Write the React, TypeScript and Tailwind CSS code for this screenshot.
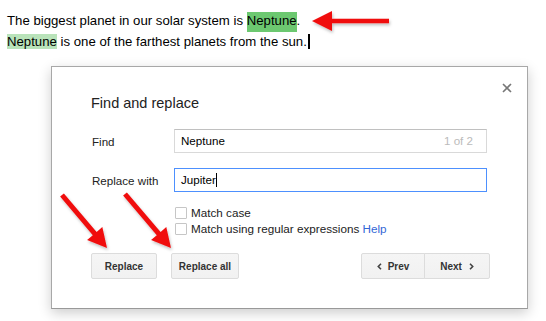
import React from "react";

type Pt = [number, number];

function arrowPoints(a: Pt, t: Pt, headLen: number, headHalf: number, shaftHalf: number): string {
  const dx = t[0] - a[0];
  const dy = t[1] - a[1];
  const len = Math.hypot(dx, dy);
  const ux = dx / len;
  const uy = dy / len;
  const nx = -uy;
  const ny = ux;
  const bx = t[0] - ux * headLen;
  const by = t[1] - uy * headLen;
  const pts: Pt[] = [
    [a[0] + nx * shaftHalf, a[1] + ny * shaftHalf],
    [bx + nx * shaftHalf, by + ny * shaftHalf],
    [bx + nx * headHalf, by + ny * headHalf],
    [t[0], t[1]],
    [bx - nx * headHalf, by - ny * headHalf],
    [bx - nx * shaftHalf, by - ny * shaftHalf],
    [a[0] - nx * shaftHalf, a[1] - ny * shaftHalf],
  ];
  return pts.map((p) => p.join(",")).join(" ");
}

function Arrows() {
  return (
    <svg
      className="pointer-events-none absolute left-0 top-0"
      width={546}
      height={321}
      viewBox="0 0 546 321"
    >
      <defs>
        <filter id="sh" x="-20%" y="-20%" width="140%" height="140%">
          <feDropShadow dx="1" dy="2" stdDeviation="1.5" floodColor="#000" floodOpacity="0.25" />
        </filter>
      </defs>
      <g fill="#f00f0f" filter="url(#sh)">
        <polygon points={arrowPoints([389, 21], [312, 21], 20, 10, 2.2)} />
        <polygon points={arrowPoints([62, 195], [107, 248], 19, 10, 2.5)} />
        <polygon points={arrowPoints([125, 194], [171, 248], 19, 10, 2.5)} />
      </g>
    </svg>
  );
}

function Checkbox() {
  return <span className="inline-block h-[12px] w-[12px] shrink-0 rounded-[1px] border border-[#c6c6c6] bg-white" />;
}

function Btn({ children, className = "" }: { children: React.ReactNode; className?: string }) {
  return (
    <div
      className={
        "flex h-[26px] items-center justify-center border border-[#dcdcdc] bg-gradient-to-b from-[#f5f5f5] to-[#f1f1f1] text-[10px] font-bold text-[#333] " +
        className
      }
    >
      {children}
    </div>
  );
}

export default function App() {
  return (
    <div
      className="relative h-[321px] w-[546px] overflow-hidden bg-white"
      style={{ fontFamily: '"Liberation Sans", Arial, sans-serif' }}
    >
      <div className="pl-[7px] pt-[11px] text-[13.2px] leading-[20px] text-black">
        <div>
          The biggest planet in our solar system is{" "}
          <span className="bg-[#6cc870] pb-[4px] pt-[1px]">Neptune</span>.
        </div>
        <div>
          <span className="bg-[#b9e3ba]">Neptune</span> is one of the farthest planets from the sun.
          <span className="ml-[1px] inline-block h-[15px] w-[2px] translate-y-[3px] bg-black" />
        </div>
      </div>

      <div className="relative ml-[51px] mt-[14px] h-[243px] w-[477px] border border-[#a8a8a8] border-b-[#999] bg-white pl-[39px] pr-[39px] pt-[27px] shadow-[0_4px_12px_rgba(0,0,0,0.2)]">
        <svg className="absolute right-[15px] top-[16px]" width="10" height="10" viewBox="0 0 10 10">
          <path d="M1 1L9 9M9 1L1 9" stroke="#777" strokeWidth="1.6" />
        </svg>

        <div className="text-[14.5px] leading-[18px] text-[#222]">Find and replace</div>

        <div className="mt-[17px] flex items-center text-[11.6px] text-[#222]">
          <div className="w-[83px] pl-[1px] pt-[2px]">Find</div>
          <div className="flex h-[24px] w-[313px] items-center justify-between border border-[#d9d9d9] border-t-[#c0c0c0] pl-[6px] pr-[13px] text-black">
            <span>Neptune</span>
            <span className="text-[#bbb]">1 of 2</span>
          </div>
        </div>

        <div className="mt-[15px] flex items-center text-[11.6px] text-[#222]">
          <div className="w-[83px] pl-[1px] pt-[2px]">Replace with</div>
          <div className="flex h-[24px] w-[313px] items-center border border-[#4d90fe] pl-[6px] text-black">
            <span>Jupiter</span>
            <span className="inline-block h-[14px] w-[1px] bg-black" />
          </div>
        </div>

        <div className="ml-[84px] mt-[15px] flex flex-col gap-[4px] text-[11.7px] leading-[12px] text-[#222]">
          <div className="flex items-center gap-[4px]">
            <Checkbox />
            <span>Match case</span>
          </div>
          <div className="flex items-center gap-[4px]">
            <Checkbox />
            <span>
              Match using regular expressions <span className="text-[#3367d6]">Help</span>
            </span>
          </div>
        </div>

        <div className="mt-[18px] flex items-center">
          <Btn className="w-[66px] rounded-[2px]">Replace</Btn>
          <Btn className="ml-[14px] w-[68px] rounded-[2px]">Replace all</Btn>
          <div className="ml-auto mr-[-2px] flex">
            <Btn className="w-[64px] gap-[6px] rounded-l-[2px]">
              <svg width="5" height="7" viewBox="0 0 5 7">
                <path d="M4 0.8L1.3 3.5L4 6.2" stroke="#444" strokeWidth="1.6" fill="none" />
              </svg>
              <span>Prev</span>
            </Btn>
            <Btn className="-ml-px w-[66px] gap-[7px] rounded-r-[2px]">
              <span>Next</span>
              <svg width="5" height="7" viewBox="0 0 5 7">
                <path d="M1 0.8L3.7 3.5L1 6.2" stroke="#444" strokeWidth="1.6" fill="none" />
              </svg>
            </Btn>
          </div>
        </div>
      </div>

      <Arrows />
    </div>
  );
}
